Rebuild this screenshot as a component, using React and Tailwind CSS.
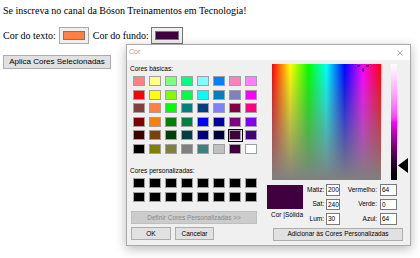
import React from "react";

const basic = [
  ["#FF8080", "#FFFF80", "#80FF80", "#00FF80", "#80FFFF", "#0080FF", "#FF80C0", "#FF80FF"],
  ["#FF0000", "#FFFF00", "#80FF00", "#00FF40", "#00FFFF", "#0080C0", "#8080C0", "#FF00FF"],
  ["#804040", "#FF8040", "#00FF00", "#008080", "#004080", "#8080FF", "#800040", "#FF0080"],
  ["#800000", "#FF8000", "#008000", "#008040", "#0000FF", "#0000A0", "#800080", "#8000FF"],
  ["#400000", "#804000", "#004000", "#004040", "#000080", "#000040", "#400040", "#400080"],
  ["#000000", "#808000", "#808040", "#808080", "#408080", "#C0C0C0", "#400040", "#FFFFFF"],
];

function Swatch({ color, selected }) {
  return (
    <div className="relative w-[12px] h-[10px]">
      {selected && (
        <div className="absolute -left-[1.5px] -top-[1.5px] -right-[1.5px] -bottom-[1.5px] border border-black" />
      )}
      <div
        className="w-[12px] h-[10px] border border-[#a0a0a0]"
        style={{ backgroundColor: color }}
      />
    </div>
  );
}

function Field({ value, w }) {
  return (
    <div
      className={`h-[11.5px] bg-white border border-[#7a7a7a] pl-[1px] leading-[9.5px] ${w}`}
    >
      {value}
    </div>
  );
}

function Spectrum() {
  return (
    <svg width="109" height="116" viewBox="0 0 109 116" className="block">
      <defs>
        <linearGradient id="hue" x1="0" y1="0" x2="1" y2="0">
          <stop offset="0" stopColor="#ff0000" />
          <stop offset="0.1667" stopColor="#ffff00" />
          <stop offset="0.3333" stopColor="#00ff00" />
          <stop offset="0.5" stopColor="#00ffff" />
          <stop offset="0.6667" stopColor="#0000ff" />
          <stop offset="0.8333" stopColor="#ff00ff" />
          <stop offset="1" stopColor="#ff0000" />
        </linearGradient>
        <linearGradient id="gray" x1="0" y1="0" x2="0" y2="1">
          <stop offset="0" stopColor="#808080" stopOpacity="0" />
          <stop offset="1" stopColor="#808080" stopOpacity="1" />
        </linearGradient>
      </defs>
      <rect x="0" y="0" width="109" height="116" fill="url(#hue)" />
      <rect x="0" y="0" width="109" height="116" fill="url(#gray)" />
      <rect x="85" y="1" width="3" height="1.5" fill="#000" />
      <rect x="94" y="1" width="3" height="1.5" fill="#000" />
      <rect x="90.5" y="4" width="1.5" height="4" fill="#000" />
    </svg>
  );
}

function Dialog() {
  return (
    <div className="absolute left-[126px] top-[44px] w-[285px] h-[202px] border border-[#aaaaaa] bg-[#f0f0f0] shadow-[0_3px_10px_rgba(0,0,0,0.28)] flex flex-col font-['Liberation_Sans',Arial,sans-serif] text-[6.5px] text-black">
      <div className="h-[15px] bg-white flex items-center justify-between pl-[2px] pr-[7px]">
        <span className="text-[#a0a0a0] text-[7px]">Cor</span>
        <svg width="6" height="6" viewBox="0 0 6 6">
          <path d="M0.3 0.3 L5.7 5.7 M5.7 0.3 L0.3 5.7" stroke="#9a9a9a" strokeWidth="0.8" />
        </svg>
      </div>
      <div className="flex-1 flex pl-[3px]">
        <div className="w-[137px] flex flex-col items-start">
          <div className="mt-[4px] leading-[10px]">Cores básicas:</div>
          <div className="mt-[2px] ml-[3px] grid grid-cols-8 gap-x-[4px] gap-y-[3.5px]">
            {basic.map((row, r) =>
              row.map((c, i) => (
                <Swatch key={`${r}-${i}`} color={c} selected={r === 4 && i === 6} />
              ))
            )}
          </div>
          <div className="mt-[12.5px] leading-[10px]">Cores personalizadas:</div>
          <div className="mt-[2px] ml-[3px] grid grid-cols-8 gap-x-[4px] gap-y-[4px]">
            {Array.from({ length: 16 }).map((_, i) => (
              <div key={i} className="w-[12px] h-[10px] bg-black border border-[#a0a0a0]" />
            ))}
          </div>
          <div className="mt-[9px] ml-[1px] w-[126px] h-[13px] bg-[#cccccc] border border-[#bfbfbf] text-[#8a8a8a] flex items-center justify-center">
            Definir Cores Personalizadas &gt;&gt;
          </div>
          <div className="mt-[3px] ml-[1px] flex gap-[4px]">
            <div className="w-[40px] h-[13px] bg-[#e1e1e1] border border-[#adadad] flex items-center justify-center">
              OK
            </div>
            <div className="w-[39px] h-[13px] bg-[#e1e1e1] border border-[#adadad] flex items-center justify-center">
              Cancelar
            </div>
          </div>
        </div>
        <div className="flex flex-col">
          <div className="mt-[4px] flex items-start">
            <div className="ml-[5px]">
              <Spectrum />
            </div>
            <div className="ml-[10px] w-[6px] h-[116px] bg-linear-to-b from-white via-[#ff00ff] to-black" />
            <svg width="10" height="15" viewBox="0 0 10 15" className="ml-[1px] mt-[94px]">
              <polygon points="0,7.5 10,0 10,15" fill="#000" />
            </svg>
          </div>
          <div className="mt-[4px] flex items-start">
            <div className="w-[40px] flex flex-col">
              <div className="mt-[1px] w-[36px] h-[24px] bg-[#400040]" />
              <div className="mt-[1px] leading-[10px] text-center">Cor |Sólida</div>
            </div>
            <div className="flex flex-col gap-[3px]">
              {[
                ["Matiz:", "200", "Vermelho:", "64"],
                ["Sat:", "240", "Verde:", "0"],
                ["Lum:", "30", "Azul:", "64"],
              ].map(([a, b, c, d]) => (
                <div key={a} className="flex items-center">
                  <div className="w-[17px] text-right leading-[10px]">{a}</div>
                  <div className="ml-[2px]">
                    <Field value={b} w="w-[14px]" />
                  </div>
                  <div className="w-[37px] text-right leading-[10px]">{c}</div>
                  <div className="ml-[3px]">
                    <Field value={d} w="w-[17px]" />
                  </div>
                </div>
              ))}
            </div>
          </div>
          <div className="mt-[3px] ml-[6px] w-[130px] h-[13px] bg-[#e1e1e1] border border-[#adadad] flex items-center justify-center">
            Adicionar às Cores Personalizadas
          </div>
        </div>
      </div>
    </div>
  );
}

export default function App() {
  return (
    <div className="relative w-[420px] h-[258px] bg-white overflow-hidden">
      <div className="flex flex-col items-start pl-[3px] pt-[5px] font-['Liberation_Serif','Times_New_Roman',serif] text-[10px] text-black">
        <p className="leading-[12px]">Se inscreva no canal da Bóson Treinamentos em Tecnologia!</p>
        <div className="mt-[10px] flex items-center h-[17px] leading-[12px]">
          <span>Cor do texto:</span>
          <div className="ml-[3px] w-[30px] h-[17px] border border-[#a9a9a9] bg-[#efefef] px-[3px] py-[3px]">
            <div className="w-full h-full bg-[#ff8040] border border-[#777777]" />
          </div>
          <span className="ml-[4px]">Cor do fundo:</span>
          <div className="ml-[2px] w-[32px] h-[17px] border border-[#767676] bg-[#efefef] px-[3px] py-[3px]">
            <div className="w-full h-full bg-[#400040] border border-[#777777]" />
          </div>
        </div>
        <button className="mt-[11px] h-[14px] w-[108px] border border-[#adadad] bg-[#e1e1e1] font-['Liberation_Sans',Arial,sans-serif] text-[8px] leading-[12px] flex items-center justify-center">
          Aplica Cores Selecionadas
        </button>
      </div>
      <Dialog />
    </div>
  );
}
